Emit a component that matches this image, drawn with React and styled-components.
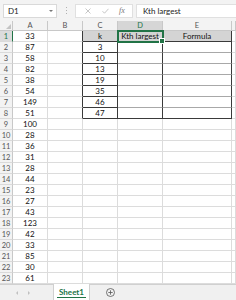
import React from "react";
import styled, { createGlobalStyle } from "styled-components";

const Global = createGlobalStyle`
  html, body { margin: 0; padding: 0; background: #fff; }
  body { width: 236px; height: 300px; overflow: hidden; font-family: Lato, "Open Sans", sans-serif; }
  * { box-sizing: border-box; }
`;

const GREEN = "#217346";
const GRID = "#dcdcdc";
const DARK = "#3a3a3a";

const Page = styled.div`
  width: 236px;
  height: 300px;
  display: flex;
  flex-direction: column;
  overflow: hidden;
`;

const Toolbar = styled.div`
  height: 21px;
  flex: none;
  background: #f3f3f3;
  display: flex;
  align-items: center;
  padding: 0 0 0 3px;
`;

const NameBox = styled.div`
  width: 54px;
  height: 14px;
  background: #fff;
  border: 1px solid #d9d9d9;
  display: flex;
  align-items: center;
  justify-content: space-between;
  padding: 0 3px 0 4px;
  font-size: 8px;
  color: #222;
`;

const Caret = styled.span`
  width: 0;
  height: 0;
  border-left: 2px solid transparent;
  border-right: 2px solid transparent;
  border-top: 2px solid #777;
`;

const Dots = styled.div`
  width: 18px;
  display: flex;
  flex-direction: column;
  align-items: center;
  gap: 2px;
  & > span { width: 1px; height: 1px; background: #b0b0b0; }
`;

const FxBox = styled.div`
  width: 58px;
  height: 14px;
  background: #fff;
  border: 1px solid #e0e0e0;
  display: flex;
  align-items: center;
  justify-content: space-around;
  padding: 0 2px 0 4px;
  color: #b5b5b5;
`;

const Fx = styled.span`
  font-family: "Liberation Serif", serif;
  font-style: italic;
  font-size: 8px;
  color: #777;
`;

const FormulaInput = styled.div`
  flex: 1;
  height: 14px;
  margin-left: 3px;
  background: #fff;
  border: 1px solid #e0e0e0;
  border-right: none;
  display: flex;
  align-items: center;
  padding-left: 6px;
  font-size: 8px;
  color: #222;
`;

const Sheet = styled.div`
  flex: 1;
  display: grid;
  grid-template-columns: 13px 35px 35px 35px 45px 69px 1fr;
  grid-template-rows: 10px repeat(23, 11px);
  position: relative;
  align-content: start;
`;

const ColHead = styled.div`
  background: ${(p) => (p.$active ? "#d6d6d6" : "#f3f3f3")};
  color: ${(p) => (p.$active ? GREEN : "#555")};
  border-right: 1px solid #c8c8c8;
  border-bottom: 1px solid ${(p) => (p.$active ? GREEN : "#c8c8c8")};
  font-size: 7.5px;
  display: flex;
  align-items: center;
  justify-content: center;
  position: relative;
`;

const Corner = styled(ColHead)`
  &::after {
    content: "";
    position: absolute;
    right: 1px;
    bottom: 1px;
    width: 0;
    height: 0;
    border-left: 5px solid transparent;
    border-bottom: 5px solid #c4c4c4;
  }
`;

const RowHead = styled.div`
  background: ${(p) => (p.$active ? "#dcdcdc" : "#f3f3f3")};
  color: ${(p) => (p.$active ? GREEN : "#555")};
  border-right: 1px solid ${(p) => (p.$active ? GREEN : "#c8c8c8")};
  border-bottom: 1px solid #dadada;
  font-size: 7.5px;
  display: flex;
  align-items: center;
  justify-content: center;
`;

const Cell = styled.div`
  background: ${(p) => p.$bg || "#fff"};
  border-right: 1px solid ${(p) => p.$rb || GRID};
  border-bottom: 1px solid ${(p) => p.$bb || GRID};
  font-size: 8px;
  color: #111;
  display: flex;
  align-items: center;
  justify-content: center;
  white-space: nowrap;
  overflow: hidden;
`;

const Selection = styled.div`
  position: absolute;
  left: 117px;
  top: 9px;
  width: 47px;
  height: 13px;
  border: 2px solid ${GREEN};
  pointer-events: none;
  &::after {
    content: "";
    position: absolute;
    right: -3px;
    bottom: -3px;
    width: 4px;
    height: 4px;
    background: ${GREEN};
    border: 1px solid #fff;
  }
`;

const TabBar = styled.div`
  height: 16px;
  flex: none;
  background: #f0f0f0;
  border-top: 1px solid #d0d0d0;
  display: flex;
  align-items: stretch;
`;

const Arrows = styled.div`
  width: 53px;
  display: flex;
  align-items: center;
  justify-content: center;
  gap: 10px;
  padding-right: 8px;
  & > span {
    width: 0;
    height: 0;
    border-top: 2px solid transparent;
    border-bottom: 2px solid transparent;
  }
  & > span:first-child { border-right: 2px solid #c0c0c0; }
  & > span:last-child { border-left: 2px solid #c0c0c0; }
`;

const Tab = styled.div`
  width: 37px;
  background: #fff;
  border-left: 1px solid #d0d0d0;
  border-right: 1px solid #d0d0d0;
  margin-top: -1px;
  display: flex;
  align-items: center;
  justify-content: center;
  font-size: 8px;
  font-weight: 700;
  color: ${GREEN};
  position: relative;
  &::after {
    content: "";
    position: absolute;
    left: 3px;
    right: 3px;
    bottom: 2px;
    height: 1px;
    background: ${GREEN};
  }
`;

const AddSheet = styled.div`
  width: 40px;
  display: flex;
  align-items: center;
  justify-content: center;
`;

const A = [33, 87, 58, 82, 38, 54, 149, 51, 100, 28, 36, 31, 28, 44, 23, 27, 43, 123, 42, 33, 85, 30, 61];
const C = ["k", 3, 10, 13, 19, 35, 46, 47];

export default function App() {
  const rows = [];
  for (let r = 0; r < 23; r++) {
    const inTable = r < 8;
    const isHead = r === 0;
    rows.push(
      <RowHead key={`h${r}`} $active={r === 0}>{r + 1}</RowHead>,
      <Cell key={`a${r}`}>{A[r]}</Cell>,
      <Cell key={`b${r}`} $rb={inTable ? DARK : undefined}></Cell>,
      <Cell
        key={`c${r}`}
        $rb={inTable ? DARK : undefined}
        $bb={inTable ? DARK : undefined}
        $bg={isHead ? "#d4d4d4" : undefined}
      >
        {C[r]}
      </Cell>,
      <Cell
        key={`d${r}`}
        $rb={inTable ? DARK : undefined}
        $bb={r === 7 || isHead ? DARK : inTable ? "#a8a8a8" : undefined}
        $bg={isHead ? "#d4d4d4" : undefined}
      >
        {isHead ? "Kth largest" : ""}
      </Cell>,
      <Cell
        key={`e${r}`}
        $rb={inTable ? DARK : undefined}
        $bb={r === 7 || isHead ? DARK : inTable ? "#a8a8a8" : undefined}
        $bg={isHead ? "#d4d4d4" : undefined}
      >
        {isHead ? "Formula" : ""}
      </Cell>,
      <Cell key={`f${r}`}></Cell>
    );
  }

  return (
    <Page>
      <Global />
      <Toolbar>
        <NameBox>
          <span>D1</span>
          <Caret />
        </NameBox>
        <Dots>
          <span />
          <span />
          <span />
        </Dots>
        <FxBox>
          <svg width="6" height="6" viewBox="0 0 6 6">
            <path d="M0.5 0.5L5.5 5.5M5.5 0.5L0.5 5.5" stroke="#b8b8b8" strokeWidth="0.8" />
          </svg>
          <svg width="7" height="6" viewBox="0 0 7 6">
            <path d="M0.5 3.2L2.5 5.2L6.5 0.8" stroke="#b8b8b8" strokeWidth="0.8" fill="none" />
          </svg>
          <Fx>fx</Fx>
        </FxBox>
        <FormulaInput>Kth largest</FormulaInput>
      </Toolbar>
      <Sheet>
        <Corner />
        <ColHead>A</ColHead>
        <ColHead>B</ColHead>
        <ColHead>C</ColHead>
        <ColHead $active>D</ColHead>
        <ColHead>E</ColHead>
        <ColHead></ColHead>
        {rows}
        <Selection />
      </Sheet>
      <TabBar>
        <Arrows>
          <span />
          <span />
        </Arrows>
        <Tab>Sheet1</Tab>
        <AddSheet>
          <svg width="9" height="9" viewBox="0 0 9 9">
            <circle cx="4.5" cy="4.5" r="4" fill="none" stroke="#555" strokeWidth="0.8" />
            <path d="M4.5 2.3V6.7M2.3 4.5H6.7" stroke="#555" strokeWidth="0.8" />
          </svg>
        </AddSheet>
      </TabBar>
    </Page>
  );
}
